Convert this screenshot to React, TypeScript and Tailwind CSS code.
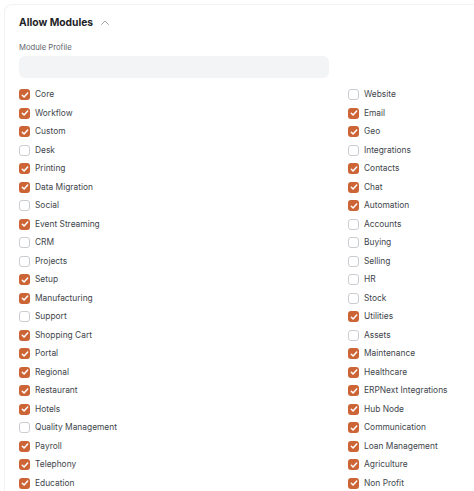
import React from 'react';

const left: [string, boolean][] = [
  ['Core', true],
  ['Workflow', true],
  ['Custom', true],
  ['Desk', false],
  ['Printing', true],
  ['Data Migration', true],
  ['Social', false],
  ['Event Streaming', true],
  ['CRM', false],
  ['Projects', false],
  ['Setup', true],
  ['Manufacturing', true],
  ['Support', false],
  ['Shopping Cart', true],
  ['Portal', true],
  ['Regional', true],
  ['Restaurant', true],
  ['Hotels', true],
  ['Quality Management', false],
  ['Payroll', true],
  ['Telephony', true],
  ['Education', true],
];

const right: [string, boolean][] = [
  ['Website', false],
  ['Email', true],
  ['Geo', true],
  ['Integrations', false],
  ['Contacts', true],
  ['Chat', true],
  ['Automation', true],
  ['Accounts', false],
  ['Buying', false],
  ['Selling', false],
  ['HR', false],
  ['Stock', false],
  ['Utilities', true],
  ['Assets', false],
  ['Maintenance', true],
  ['Healthcare', true],
  ['ERPNext Integrations', true],
  ['Hub Node', true],
  ['Communication', true],
  ['Loan Management', true],
  ['Agriculture', true],
  ['Non Profit', true],
];

const Check = ({ label, checked }: { label: string; checked: boolean }) => (
  <label className="flex items-center gap-[5px] h-[18.5px]">
    {checked ? (
      <span className="w-[11px] h-[11px] rounded-[3px] bg-[#cc6436] flex items-center justify-center">
        <svg width="8" height="8" viewBox="0 0 8 8" fill="none">
          <path d="M1.3 4.2 3.1 6 6.7 2" stroke="white" strokeWidth="1.5" strokeLinecap="round" strokeLinejoin="round" />
        </svg>
      </span>
    ) : (
      <span className="w-[11px] h-[11px] rounded-[3px] border border-[#c9cdd2] bg-white"></span>
    )}
    <span className="text-[8.4px] whitespace-nowrap text-[#41464c]">{label}</span>
  </label>
);

const App = () => {
  return (
    <div className="min-h-screen bg-white pl-1 pt-1 font-['Inter',sans-serif]">
      <div className="rounded-tl-lg border-t border-l border-[#f1f2f3] pl-[14px] pt-[11px] pb-4">
        <div className="flex items-center gap-[7px] h-[14px]">
          <h2 className="text-[10.3px] font-bold text-[#1f2328]">Allow Modules</h2>
          <svg width="10" height="10" viewBox="0 0 10 10" fill="none">
            <path d="M1.5 6.5 5 3l3.5 3.5" stroke="#a3a8ad" strokeWidth="1" strokeLinecap="round" strokeLinejoin="round" />
          </svg>
        </div>
        <div className="mt-[12px] text-[7.7px] text-[#5f656b]">Module Profile</div>
        <div className="mt-[2px] w-[310px] h-[22px] rounded-md bg-[#f3f4f6]"></div>
        <div className="mt-[8px] grid grid-cols-[329px_1fr]">
          <div className="flex flex-col">
            {left.map(([l, c]) => (
              <Check key={l} label={l} checked={c} />
            ))}
          </div>
          <div className="flex flex-col">
            {right.map(([l, c]) => (
              <Check key={l} label={l} checked={c} />
            ))}
          </div>
        </div>
      </div>
    </div>
  );
};

export default App;
